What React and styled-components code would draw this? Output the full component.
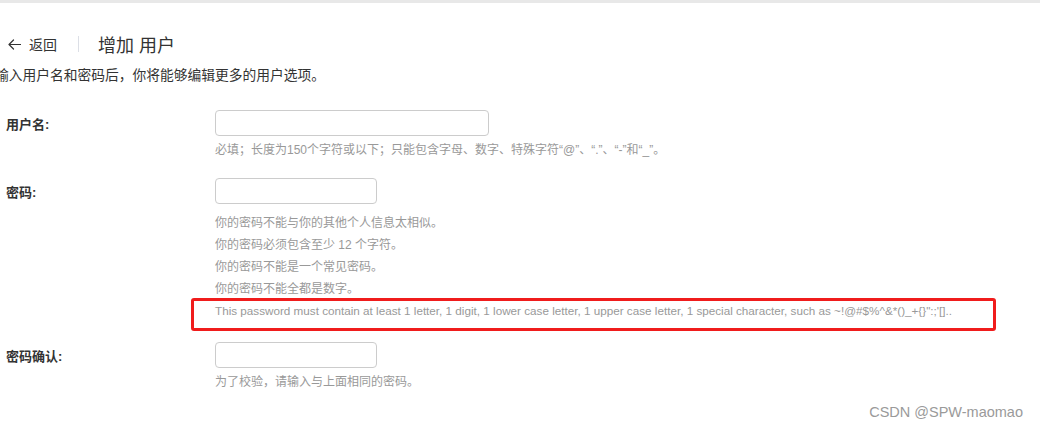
import React from "react";
import styled, { createGlobalStyle } from "styled-components";

const GlobalStyle = createGlobalStyle`
  html, body {
    margin: 0;
    padding: 0;
    background: #fff;
  }
  body {
    font-family: "Liberation Sans", "Noto Sans CJK SC", sans-serif;
    color: #333;
  }
`;

const rows = [
  {
    label: "用户名:",
    width: 274,
    help: ["必填；长度为150个字符或以下；只能包含字母、数字、特殊字符“@”、“.”、“-”和“_”。"],
  },
  {
    label: "密码:",
    width: 162,
    list: [
      "你的密码不能与你的其他个人信息太相似。",
      "你的密码必须包含至少 12 个字符。",
      "你的密码不能是一个常见密码。",
      "你的密码不能全都是数字。",
    ],
    marked:
      "This password must contain at least 1 letter, 1 digit, 1 lower case letter, 1 upper case letter, 1 special character, such as ~!@#$%^&*()_+{}\":;'[]..",
  },
  {
    label: "密码确认:",
    width: 162,
    help: ["为了校验，请输入与上面相同的密码。"],
  },
];

export default function App() {
  return (
    <Page>
      <GlobalStyle />
      <TopBar />
      <Header>
        <Back>
          <svg width="13" height="11" viewBox="0 0 13 11" fill="none">
            <path
              d="M5.5 1 L1 5.5 L5.5 10 M1 5.5 H12.5"
              stroke="#333"
              strokeWidth="1.2"
              strokeLinecap="round"
              strokeLinejoin="round"
            />
          </svg>
          <span>返回</span>
        </Back>
        <Divider />
        <Title>增加 用户</Title>
      </Header>
      <Intro>输入用户名和密码后，你将能够编辑更多的用户选项。</Intro>

      <Form>
        {rows.map((row, i) => (
          <Row key={i}>
            <Label>{row.label}</Label>
            <Field>
              <Input $width={row.width} type="text" />
              {row.help && <Help>{row.help[0]}</Help>}
              {row.list && (
                <HelpList>
                  {row.list.map((t, j) => (
                    <li key={j}>{t}</li>
                  ))}
                  <li className="marked">
                    {row.marked}
                    <Highlight />
                  </li>
                </HelpList>
              )}
            </Field>
          </Row>
        ))}
      </Form>

      <Watermark>CSDN @SPW-maomao</Watermark>
    </Page>
  );
}

const Page = styled.div`
  position: relative;
  width: 1040px;
  height: 426px;
  overflow: hidden;
  background: #fff;
`;

const TopBar = styled.div`
  height: 3px;
  background: #e8e8e8;
`;

const Header = styled.div`
  display: flex;
  align-items: center;
  height: 28px;
  margin-top: 27px;
  padding-left: 8px;
`;

const Back = styled.div`
  display: flex;
  align-items: center;
  gap: 8px;
  font-size: 14px;
  color: #333;
  cursor: pointer;
  svg {
    display: block;
  }
`;

const Divider = styled.div`
  width: 1px;
  height: 16px;
  background: #dcdfe6;
  margin: 0 19px 0 21px;
`;

const Title = styled.div`
  font-size: 18px;
  color: #333;
`;

const Intro = styled.div`
  margin: 8px 0 0 -5px;
  font-size: 13.75px;
  line-height: 20px;
  color: #333;
  white-space: nowrap;
`;

const Form = styled.div`
  display: flex;
  flex-direction: column;
  gap: 20px;
  margin-top: 24px;
  padding-left: 6px;
`;

const Row = styled.div`
  display: grid;
  grid-template-columns: 209px 1fr;
  align-items: start;
`;

const Label = styled.div`
  padding-top: 2px;
  line-height: 26px;
  font-size: 13px;
  font-weight: 700;
  color: #333;
`;

const Field = styled.div`
  display: flex;
  flex-direction: column;
  align-items: flex-start;
`;

const Input = styled.input`
  box-sizing: border-box;
  width: ${(p) => p.$width}px;
  height: 26px;
  border: 1px solid #ccc;
  border-radius: 4px;
  margin: 0;
  padding: 0 6px;
  outline: none;
`;

const Help = styled.div`
  margin-top: 6px;
  font-size: 12px;
  line-height: 16px;
  color: #999;
  white-space: nowrap;
`;

const HelpList = styled.ul`
  list-style: none;
  margin: 8px 0 0;
  padding: 0;
  font-size: 12px;
  color: #999;
  li {
    line-height: 22px;
    white-space: nowrap;
  }
  .marked {
    position: relative;
    font-size: 11.7px;
  }
`;

const Highlight = styled.span`
  position: absolute;
  left: -24px;
  top: -2px;
  width: 805px;
  height: 33px;
  box-sizing: border-box;
  border: 3px solid #f01c1c;
  border-radius: 3px;
  pointer-events: none;
`;

const Watermark = styled.div`
  position: absolute;
  right: 17px;
  bottom: 6px;
  font-size: 14.5px;
  color: #9a9a9a;
`;
